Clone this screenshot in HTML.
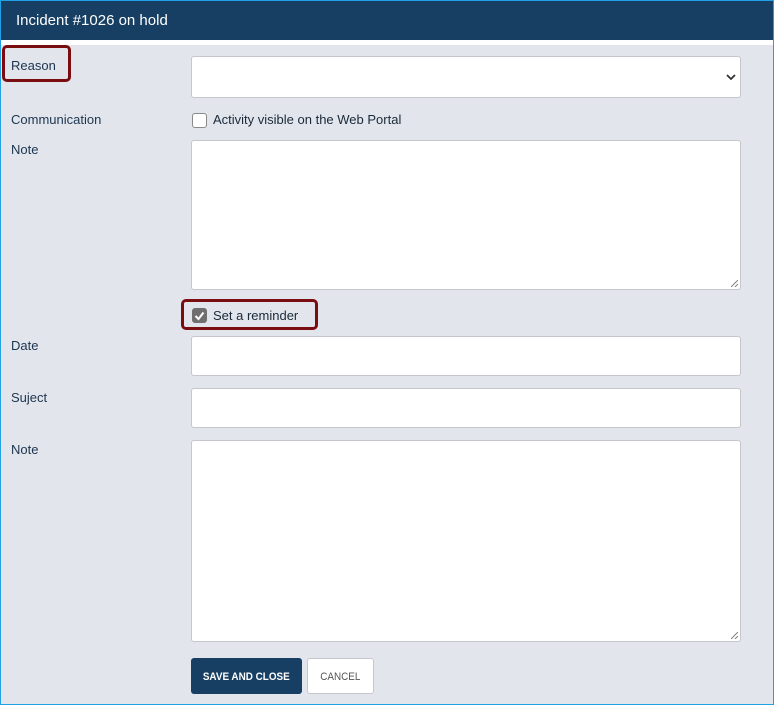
<!DOCTYPE html>
<html><head><style>
*{box-sizing:border-box;margin:0;padding:0}
body{width:774px;height:705px;overflow:hidden;background:#e2e5ec;font-family:"Liberation Sans",sans-serif;position:relative}
.frame{position:absolute;left:0;top:0;width:774px;height:705px;border:1px solid #21a0e6;}
.hdr{position:absolute;left:1px;top:1px;width:772px;height:39px;background:#173f63;color:#fff;font-size:15px;padding:11px 0 0 15px}
.wl{position:absolute;left:1px;top:40px;width:772px;height:5px;background:#fff}
.lbl{position:absolute;left:11px;font-size:13px;color:#1c3550}
.box{position:absolute;left:191px;width:550px;background:#fff;border:1px solid #c4c7cc;border-radius:3px}
.hl{position:absolute;border:3px solid #7a0d10;border-radius:5px}
.cb{position:absolute;width:15px;height:15px;border:1px solid #8a8a8a;border-radius:3px;background:#fff}
.t{position:absolute;font-size:13px;color:#1a2a3a}
.rz{position:absolute;right:2px;bottom:2px;width:7px;height:7px;background:linear-gradient(135deg,transparent 45%,#888 45%,#888 55%,transparent 55%,transparent 75%,#888 75%,#888 85%,transparent 85%)}
.btn{position:absolute;top:658px;height:36px;border-radius:3px;font-size:11px;text-align:center}
.btn span{display:inline-block;transform:scaleX(0.9)}
</style></head><body>
<div class="frame"></div>
<div class="hdr">Incident #1026 on hold</div>
<div class="wl"></div>
<div class="hl" style="left:2px;top:45px;width:69px;height:37px"></div>
<div class="lbl" style="top:58px">Reason</div>
<div class="box" style="top:56px;height:42px"><svg style="position:absolute;right:4px;top:16px" width="10" height="8" viewBox="0 0 10 8"><path d="M1 2l4 4 4-4" stroke="#333" stroke-width="1.8" fill="none"/></svg></div>
<div class="lbl" style="top:112px">Communication</div>
<div class="cb" style="left:192px;top:113px"></div>
<div class="t" style="left:213px;top:112px">Activity visible on the Web Portal</div>
<div class="lbl" style="top:142px">Note</div>
<div class="box" style="top:140px;height:150px"><div class="rz"></div></div>
<div class="hl" style="left:181px;top:299px;width:137px;height:31px"></div>
<div class="cb" style="left:192px;top:308px;background:#6f6f6f;border-color:#6f6f6f"><svg width="13" height="13" viewBox="0 0 13 13" style="position:absolute;left:0;top:0"><path d="M2.5 7l3 3 5-6.5" stroke="#fff" stroke-width="2" fill="none"/></svg></div>
<div class="t" style="left:213px;top:308px">Set a reminder</div>
<div class="lbl" style="top:338px">Date</div>
<div class="box" style="top:336px;height:40px"></div>
<div class="lbl" style="top:390px">Suject</div>
<div class="box" style="top:388px;height:40px"></div>
<div class="lbl" style="top:442px">Note</div>
<div class="box" style="top:440px;height:202px"><div class="rz"></div></div>
<div class="btn" style="left:191px;width:111px;background:#173f63;color:#fff;font-weight:bold;line-height:38px"><span>SAVE AND CLOSE</span></div>
<div class="btn" style="left:307px;width:67px;background:#fff;border:1px solid #c4c7cc;color:#555;line-height:36px"><span>CANCEL</span></div>
</body></html>
